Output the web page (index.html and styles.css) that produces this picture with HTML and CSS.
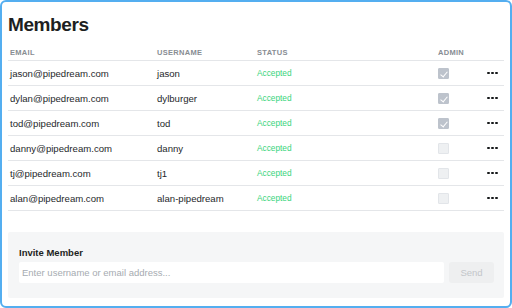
FILE: index.html
```html
<!DOCTYPE html>
<html lang="en">
<head>
    <meta charset="UTF-8">
    <title>Members</title>
    <link rel="stylesheet" href="styles.css">
</head>
<body>
    <div class="frame">
        <h1 class="title">Members</h1>

        <table class="members">
            <thead>
                <tr>
                    <th class="col-email">Email</th>
                    <th class="col-user">Username</th>
                    <th class="col-status">Status</th>
                    <th class="col-admin">Admin</th>
                    <th class="col-more"></th>
                </tr>
            </thead>
            <tbody>
                <tr>
                    <td>jason@pipedream.com</td>
                    <td>jason</td>
                    <td class="status">Accepted</td>
                    <td><span class="check on"></span></td>
                    <td class="more"><span class="dots"><i></i><i></i><i></i></span></td>
                </tr>
                <tr>
                    <td>dylan@pipedream.com</td>
                    <td>dylburger</td>
                    <td class="status">Accepted</td>
                    <td><span class="check on"></span></td>
                    <td class="more"><span class="dots"><i></i><i></i><i></i></span></td>
                </tr>
                <tr>
                    <td>tod@pipedream.com</td>
                    <td>tod</td>
                    <td class="status">Accepted</td>
                    <td><span class="check on"></span></td>
                    <td class="more"><span class="dots"><i></i><i></i><i></i></span></td>
                </tr>
                <tr>
                    <td>danny@pipedream.com</td>
                    <td>danny</td>
                    <td class="status">Accepted</td>
                    <td><span class="check"></span></td>
                    <td class="more"><span class="dots"><i></i><i></i><i></i></span></td>
                </tr>
                <tr>
                    <td>tj@pipedream.com</td>
                    <td>tj1</td>
                    <td class="status">Accepted</td>
                    <td><span class="check"></span></td>
                    <td class="more"><span class="dots"><i></i><i></i><i></i></span></td>
                </tr>
                <tr>
                    <td>alan@pipedream.com</td>
                    <td>alan-pipedream</td>
                    <td class="status">Accepted</td>
                    <td><span class="check"></span></td>
                    <td class="more"><span class="dots"><i></i><i></i><i></i></span></td>
                </tr>
            </tbody>
        </table>

        <div class="invite">
            <label class="invite-label" for="invite-input">Invite Member</label>
            <div class="invite-row">
                <input id="invite-input" class="invite-input" type="text" placeholder="Enter username or email address...">
                <button class="send-button" disabled>Send</button>
            </div>
        </div>
    </div>
</body>
</html>
```

FILE: styles.css
```css
html, body {
    margin: 0;
    height: 100%;
}

body {
    background-color: #fff;
    color: #222;
    font-family: "Liberation Sans", Arial, sans-serif;
}

.frame {
    box-sizing: border-box;
    height: 308px;
    border: 2px solid #54aef0;
    border-radius: 6px;
    padding: 10px 6px 0 6px;
}

.title {
    margin: 0;
    font-size: 19px;
    font-weight: 700;
    line-height: 26px;
    color: #1d1f22;
    letter-spacing: -0.4px;
}

.members {
    width: 100%;
    table-layout: fixed;
    border-collapse: collapse;
    margin-top: 10px;
    font-size: 9.6px;
}

.members th {
    text-align: left;
    font-size: 7.5px;
    font-weight: 700;
    color: #888d93;
    text-transform: uppercase;
    letter-spacing: 0.3px;
    padding: 0 0 3px 2px;
    height: 9px;
    border-bottom: 1px solid #e4e6e9;
}

.members td {
    height: 24px;
    padding: 0 0 0 2px;
    border-bottom: 1px solid #e4e6e9;
    color: #26282b;
}

.col-email { width: 145px; }
.col-user { width: 98px; }
.col-status { width: 179px; }
.col-admin { width: 38px; }

.members td.status {
    color: #38d47c;
    font-size: 8.3px;
}

.check {
    display: block;
    box-sizing: border-box;
    width: 11px;
    height: 11px;
    border: 1px solid #e2e5e9;
    border-radius: 1px;
    background: #eef0f2;
    position: relative;
}

.check.on {
    background: #bdc3cc;
    border-color: #bdc3cc;
}

.check.on::after {
    content: "";
    position: absolute;
    left: 3px;
    top: 1px;
    width: 3px;
    height: 6px;
    border: solid #fff;
    border-width: 0 1.5px 1.5px 0;
    transform: rotate(40deg);
}

.members td.more {
    padding-left: 11px;
}

.dots {
    display: flex;
    gap: 1.5px;
}

.dots i {
    width: 2.5px;
    height: 2.5px;
    border-radius: 50%;
    background: #16181a;
}

.invite {
    margin-top: 21px;
    background: #f5f6f7;
    border-radius: 2px;
    padding: 15px 10px 15px 11px;
}

.invite-label {
    display: block;
    font-size: 9.5px;
    font-weight: 700;
    color: #1d1f22;
    margin-bottom: 4px;
}

.invite-row {
    display: flex;
    gap: 5px;
}

.invite-input {
    flex: 1;
    height: 21px;
    box-sizing: border-box;
    border: none;
    border-radius: 2px;
    background: #fff;
    padding: 0 3px;
    font-family: inherit;
    font-size: 9.5px;
    color: #333;
}

.invite-input::placeholder {
    color: #a6abb1;
}

.send-button {
    width: 45px;
    height: 21px;
    border: none;
    border-radius: 3px;
    background: #eeeff0;
    color: #c3c6ca;
    font-family: inherit;
    font-size: 9.5px;
}
```
